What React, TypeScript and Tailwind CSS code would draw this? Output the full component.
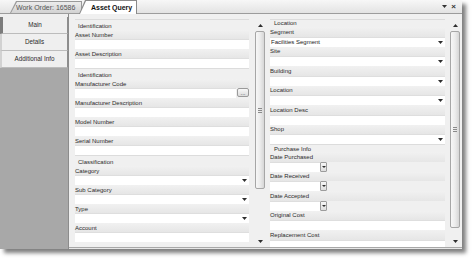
import React from "react";

const Tri = ({ up = false }: { up?: boolean }) => (
  <svg width="5" height="3" viewBox="0 0 5 3" className="block">
    <polygon points={up ? "0,3 5,3 2.5,0" : "0,0 5,0 2.5,3"} fill="#2e2e2e" />
  </svg>
);

const Label = ({ children, tall = false }: { children: React.ReactNode; tall?: boolean }) => (
  <div
    className={
      (tall ? "h-[9.5px] " : "h-[9px] ") +
      "flex items-center text-[6px] leading-none text-[#2b2b2b] whitespace-nowrap bg-gradient-to-b from-[#f1f1f1] to-[#e6e6e6]"
    }
  >
    {children}
  </div>
);

const Header = ({ children, h }: { children: React.ReactNode; h: "10" | "11" }) => (
  <div
    className={
      (h === "10" ? "h-[10px] " : "h-[11px] ") +
      "flex items-center pl-[3px] pt-[1px] text-[6px] leading-none text-[#2b2b2b] border-t border-[#dcdcdc] whitespace-nowrap"
    }
  >
    {children}
  </div>
);

const Input = ({ select = false, value = "" }: { select?: boolean; value?: string }) => (
  <div className="h-[10px] bg-white border-t border-[#dedede] relative flex items-center pl-[1px] text-[6px] leading-none text-[#222] whitespace-nowrap">
    {value}
    {select && (
      <div className="absolute right-[2px] top-[3px]">
        <Tri />
      </div>
    )}
  </div>
);

const DateInput = () => (
  <div className="h-[10px] flex items-start">
    <div className="w-[50px] h-[10px] bg-white border-t border-[#dedede]" />
    <div className="w-[7px] h-[10px] border border-[#9c9c9c] rounded-[1px] bg-gradient-to-b from-[#f6f6f6] to-[#dedede] flex items-center justify-center">
      <svg width="4" height="2" viewBox="0 0 4 2" className="block">
        <polygon points="0,0 4,0 2,2" fill="#2e2e2e" />
      </svg>
    </div>
  </div>
);

const Field = ({ label, select = false, value = "", tall = false }: { label: string; select?: boolean; value?: string; tall?: boolean }) => (
  <div className="flex flex-col">
    <Label tall={tall}>{label}</Label>
    <Input select={select} value={value} />
  </div>
);

const Scrollbar = ({ right = false }: { right?: boolean }) => (
  <div className={(right ? "w-[13px] " : "w-[14px] ") + "flex flex-col pt-[5px] bg-[#f0f0f0]"}>
    <div className="ml-[1px] w-[10px] h-[12px] flex items-center justify-center">
      <Tri up />
    </div>
    <div
      className={
        (right ? "h-[197px] " : "h-[158px] ") +
        "ml-[1px] w-[10px] rounded-[2px] border border-[#a6a6a6] bg-gradient-to-r from-[#f7f7f7] via-[#ececec] to-[#d6d6d6] flex flex-col items-center justify-center gap-[1px]"
      }
    >
      <div className="w-[4px] h-px bg-[#8a8a8a]" />
      <div className="w-[4px] h-px bg-[#8a8a8a]" />
      <div className="w-[4px] h-px bg-[#8a8a8a]" />
    </div>
    <div className="flex-1" />
    <div className="ml-[1px] w-[10px] h-[12px] flex items-center justify-center">
      <Tri />
    </div>
  </div>
);

const NavButton = ({ children, active = false }: { children: React.ReactNode; active?: boolean }) => (
  <div
    className={
      (active ? "border-l-[3px] border-l-[#7c7c7c] " : "border-l-2 border-l-[#d2d2d2] ") +
      "h-[17px] flex items-center justify-center text-[6.3px] leading-none text-[#2b2b2b] bg-[#efefef] border-b border-b-[#bcbcbc] border-r border-r-[#8e8e8e] whitespace-nowrap"
    }
  >
    {children}
  </div>
);

export default function App() {
  return (
    <div className="w-[474px] h-[258px] bg-white overflow-hidden font-['Liberation_Sans',Arial,sans-serif]">
      <div className="w-[462px] h-[249px] flex flex-col bg-[#f0f0f0] shadow-[4px_4px_4px_rgba(0,0,0,0.5)]">
        {/* Tab strip */}
        <div className="h-[14px] flex items-end bg-gradient-to-b from-[#f7f7f7] to-[#e3e3e3] border-b border-[#9c9c9c]">
          <div className="ml-[10px] h-[12px] w-[72px] bg-[#9a9a9a] [clip-path:polygon(6px_0,100%_0,100%_100%,0_100%)] pt-px pl-px">
            <div className="h-full w-[70px] bg-gradient-to-b from-[#ececec] to-[#d2d2d2] [clip-path:polygon(6px_0,100%_0,100%_100%,0_100%)] flex items-center pl-[5px] text-[7px] leading-none text-[#555] whitespace-nowrap">
              Work Order: 16586
            </div>
          </div>
          <div className="relative -ml-[3px] -mb-px h-[14px] w-[58px] bg-[#8a8a8a] [clip-path:polygon(6px_0,100%_0,100%_100%,0_100%)] pt-px pl-px pr-px">
            <div className="h-full w-full bg-white [clip-path:polygon(6px_0,100%_0,100%_100%,0_100%)] flex items-center pl-[11px] text-[7px] font-bold leading-none text-[#111] whitespace-nowrap">
              Asset Query
            </div>
          </div>
          <div className="ml-auto mr-[6px] self-center flex items-center gap-[4px]">
            <svg width="5" height="3" viewBox="0 0 5 3" className="block">
              <polygon points="0,0 5,0 2.5,3" fill="#333" />
            </svg>
            <span className="text-[8px] leading-none text-[#333] font-bold">×</span>
          </div>
        </div>

        {/* Body */}
        <div className="flex-1 flex min-h-0">
          {/* Left nav */}
          <div className="w-[68px] flex flex-col bg-[#a8a8a8]">
            <div className="h-[3px] bg-[#efefef]" />
            <NavButton active>Main</NavButton>
            <NavButton>Details</NavButton>
            <NavButton>Additional Info</NavButton>
          </div>

          {/* Content */}
          <div className="flex-1 flex flex-col border-l border-[#8c8c8c] bg-[#f0f0f0]">
            <div className="flex-1 flex overflow-hidden border-b border-[#a8a8a8]">
              {/* Left column */}
              <div className="w-[185px] pl-[6px] pr-[5px] pt-[5px] flex flex-col overflow-hidden">
                <Header h="11">Identification</Header>
                <Field label="Asset Number" />
                <Field label="Asset Description" />
                <Header h="11">Identification</Header>
                <div className="flex flex-col">
                  <Label>Manufacturer Code</Label>
                  <div className="h-[10px] flex">
                    <div className="flex-1 bg-white border-t border-[#dedede]" />
                    <div className="w-[12px] h-[9px] ml-[1px] rounded-[2px] border border-[#9a9a9a] bg-gradient-to-b from-[#f8f8f8] to-[#dcdcdc] flex items-center justify-center text-[6px] leading-none text-[#333]">
                      ...
                    </div>
                  </div>
                </div>
                <Field label="Manufacturer Description" />
                <Field label="Model Number" />
                <Field label="Serial Number" />
                <Header h="11">Classification</Header>
                <Field label="Category" select />
                <Field label="Sub Category" select />
                <Field label="Type" select />
                <Field label="Account" />
              </div>

              <Scrollbar />

              {/* Right column */}
              <div className="w-[181px] pl-[2px] pr-[4px] pt-[5px] flex flex-col overflow-hidden">
                <div className="h-[10px] flex items-end pb-[1px] pl-[4px] text-[6px] leading-none text-[#2b2b2b] border-t border-[#dcdcdc] whitespace-nowrap">
                  Location
                </div>
                <Field label="Segment" select value="Facilities Segment" tall />
                <Field label="Site" select tall />
                <Field label="Building" select tall />
                <Field label="Location" select tall />
                <Field label="Location Desc" tall />
                <Field label="Shop" select tall />
                <div className="h-[11px] flex items-center pl-[4px] pt-[1px] text-[6px] leading-none text-[#2b2b2b] border-t border-[#dcdcdc] whitespace-nowrap">
                  Purchase Info
                </div>
                <div className="flex flex-col">
                  <Label tall>Date Purchased</Label>
                  <DateInput />
                </div>
                <div className="flex flex-col">
                  <Label tall>Date Received</Label>
                  <DateInput />
                </div>
                <div className="flex flex-col">
                  <Label tall>Date Accepted</Label>
                  <DateInput />
                </div>
                <Field label="Original Cost" tall />
                <Field label="Replacement Cost" tall />
              </div>

              <Scrollbar right />
            </div>
            <div className="h-[1px] bg-[#e6e6e6]" />
          </div>
        </div>
      </div>
    </div>
  );
}
